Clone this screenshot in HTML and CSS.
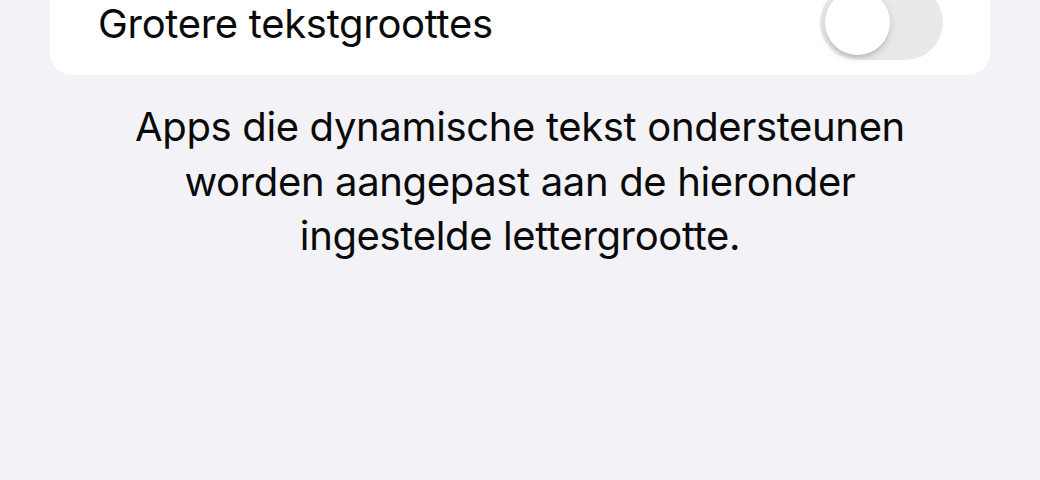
FILE: index.html
```html
<!DOCTYPE html>
<html>
	<head>
		<meta charset="UTF-8">
		<title>Tekstgrootte</title>
		<link rel="stylesheet" href="styles.css">
	</head>
	<body>
		<div class="page">
			<div class="card">
				<div class="row">
					<span class="label">Grotere tekstgroottes</span>
					<div class="switch"><i></i></div>
				</div>
			</div>
			<p class="footer">Apps die dynamische tekst ondersteunen<br>worden aangepast aan de hieronder<br>ingestelde lettergrootte.</p>
		</div>
	</body>
</html>
```

FILE: styles.css
```css
*{margin:0;padding:0;box-sizing:border-box;}
html,body{height:100%;}
body{
	background:#f2f2f7;
	font-family:Inter,"Liberation Sans",sans-serif;
	color:#0a0a0a;
	overflow:hidden;
}
.page{
	padding:0 50px;
}
.card{
	margin-top:-30px;
	height:105px;
	background:#fff;
	border-radius:0 0 22px 22px;
}
.row{
	height:100%;
	display:flex;
	align-items:center;
	justify-content:space-between;
	padding:0 47px 0 48px;
}
.label{
	font-size:40px;
	letter-spacing:-0.3px;
	margin-top:2px;
}
.switch{
	width:123px;
	height:75px;
	border-radius:38px;
	background:#e9e9eb;
	padding:5px;
}
.switch i{
	display:block;
	width:65px;
	height:65px;
	border-radius:50%;
	background:#fff;
	box-shadow:0 3px 8px rgba(0,0,0,0.15),0 3px 1px rgba(0,0,0,0.06);
}
.footer{
	margin-top:25px;
	text-align:center;
	font-size:40px;
	line-height:54.5px;
	letter-spacing:-0.35px;
}
```
